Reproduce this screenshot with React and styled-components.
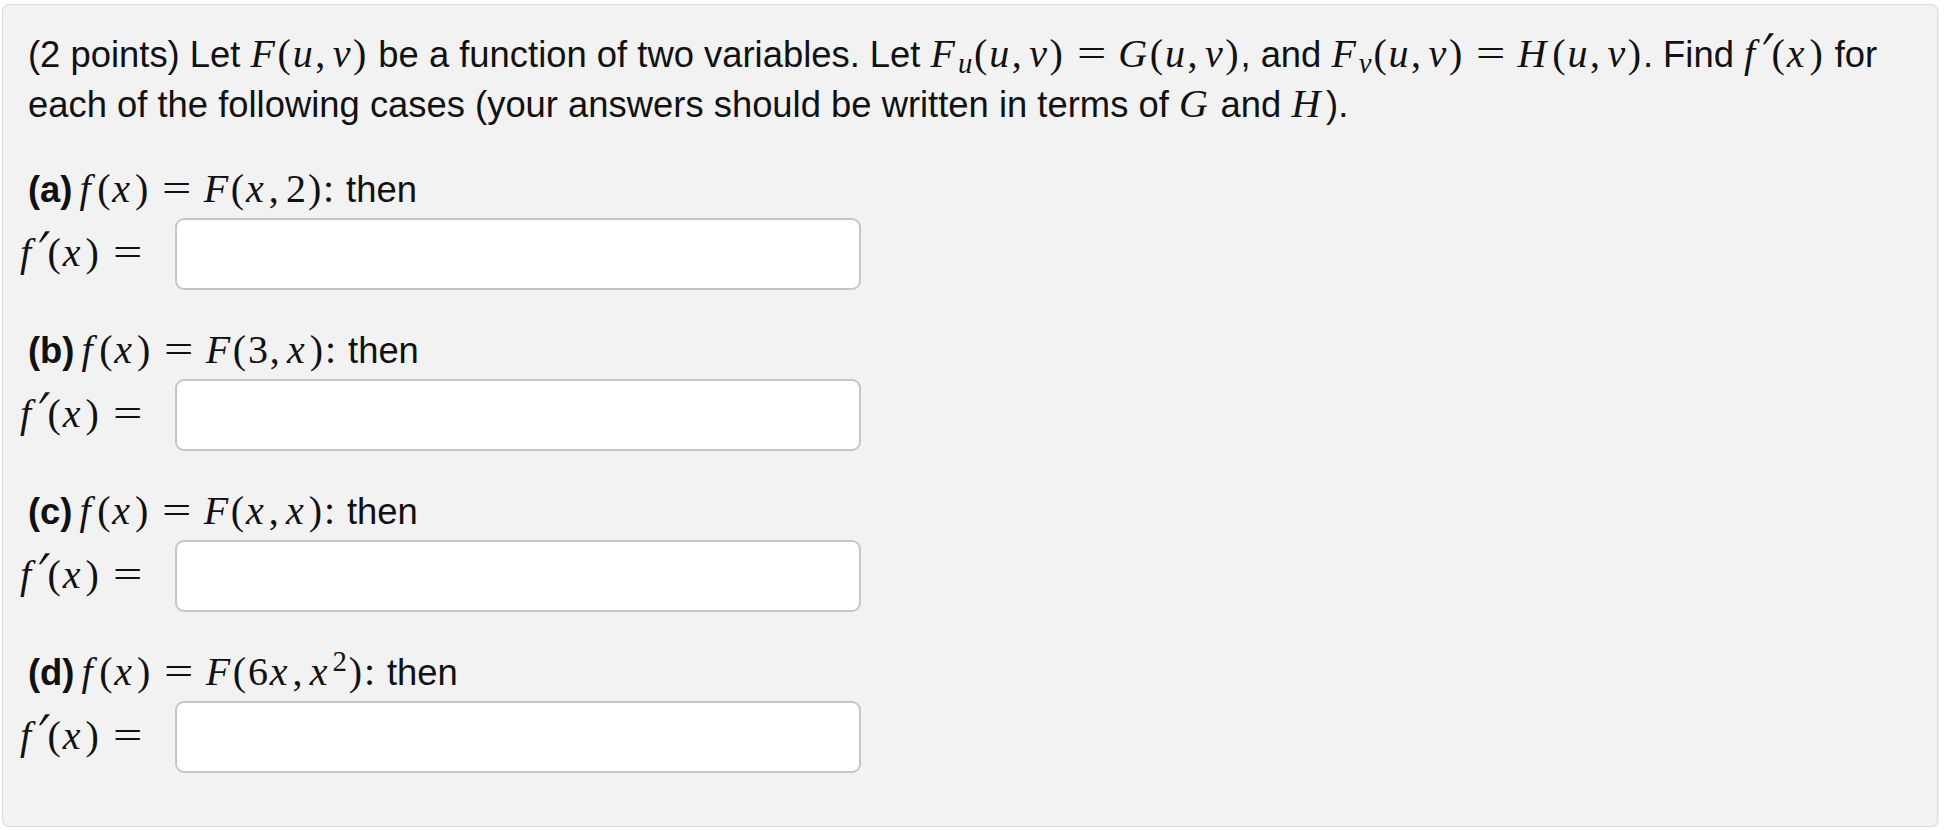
import React from "react";
import styled, { createGlobalStyle } from "styled-components";

const GlobalStyle = createGlobalStyle`
  html, body { margin: 0; padding: 0; background: #ffffff; }
  body { font-family: "Liberation Sans", Arial, Helvetica, sans-serif; color: #111; }
`;

const Page = styled.div`
  padding: 4px 14px 0 2px;
`;

const Panel = styled.div`
  box-sizing: border-box;
  height: 823px;
  background: #f2f2f2;
  border: 1px solid #d9d9d9;
  border-radius: 7px;
  box-shadow: 1px 1px 2px rgba(0, 0, 0, 0.08);
  padding: 25px 24px 0 25px;
`;

const Intro = styled.p`
  margin: 0;
  font-size: 36.4px;
  line-height: 50px;
  white-space: nowrap;
`;

const Parts = styled.div`
  display: flex;
  flex-direction: column;
  gap: 37px;
  margin-top: 35px;
`;

const Part = styled.div`
  display: flex;
  flex-direction: column;
  gap: 3px;
`;

const Label = styled.div`
  font-size: 36.4px;
  line-height: 50px;
  white-space: nowrap;
`;

const Letter = styled.b`
  font-weight: 700;
  margin-right: 7px;
`;

const AnswerRow = styled.div`
  display: flex;
  align-items: center;
  gap: 14px;
  height: 71px;
`;

const Prompt = styled.span`
  font-size: 36.4px;
  margin-left: -8px;
  width: 141px;
  white-space: nowrap;
`;

const AnswerBox = styled.input`
  box-sizing: border-box;
  width: 686px;
  height: 72px;
  background: #ffffff;
  border: 2px solid #c6c6c6;
  border-radius: 9px;
  outline: none;
  font-size: 30px;
  padding: 0 12px;
`;

const M = styled.span`
  font-family: "Liberation Serif", "Times New Roman", serif;
  font-size: 40px;
  line-height: 1;
  letter-spacing: 0.045em;
  white-space: nowrap;
`;

const I = styled.i`
  font-style: italic;
  padding-right: ${(p) => (p.$r ? p.$r : "0.02em")};
`;

const Eq = styled.span`
  display: inline-block;
  width: 0.78em;
  margin: 0 0.28em;
  text-align: center;
  letter-spacing: 0;
  transform: scaleX(1.3);
`;

const Comma = styled.span`
  margin-right: 0.14em;
`;

const Sub = styled.sub`
  font-size: 0.72em;
  font-style: italic;
  vertical-align: -0.2em;
  line-height: 0;
  margin-left: 0.01em;
`;

const Sup = styled.sup`
  font-size: 0.72em;
  vertical-align: 0.5em;
  line-height: 0;
`;

const Prime = styled.span`
  display: inline-block;
  font-family: "DejaVu Sans", sans-serif;
  font-size: 1.5em;
  line-height: 0;
  vertical-align: -0.16em;
  margin-left: -0.05em;
  margin-right: 0;
  letter-spacing: 0;
  transform: skewX(-12deg) scaleX(0.8);
`;

const UV = () => (
  <>
    (<I>u</I>
    <Comma>,</Comma>
    <I>v</I>)
  </>
);

const X = () => <I $r="0.08em">x</I>;

const FP = () => (
  <>
    <I $r="0.1em">f</I>
    <Prime>′</Prime>(<X />)
  </>
);

const parts = [
  {
    letter: "(a)",
    rhs: (
      <>
        (<X />
        <Comma>,</Comma>2)
      </>
    ),
  },
  {
    letter: "(b)",
    rhs: (
      <>
        (3<Comma>,</Comma>
        <X />)
      </>
    ),
  },
  {
    letter: "(c)",
    rhs: (
      <>
        (<X />
        <Comma>,</Comma>
        <X />)
      </>
    ),
  },
  {
    letter: "(d)",
    rhs: (
      <>
        (6<X />
        <Comma>,</Comma>
        <X />
        <Sup>2</Sup>)
      </>
    ),
  },
];

export default function App() {
  return (
    <>
      <GlobalStyle />
      <Page>
        <Panel>
          <Intro>
            (2 points) Let{" "}
            <M>
              <I>F</I>
              <UV />
            </M>{" "}
            be a function of two variables. Let{" "}
            <M>
              <I>F</I>
              <Sub>u</Sub>
              <UV />
              <Eq>=</Eq>
              <I>G</I>
              <UV />
            </M>
            , and{" "}
            <M>
              <I>F</I>
              <Sub>v</Sub>
              <UV />
              <Eq>=</Eq>
              <I $r="0.1em">H</I>
              <UV />
            </M>
            . Find{" "}
            <M>
              <FP />
            </M>{" "}
            for
            <br />
            each of the following cases (your answers should be written in terms of{" "}
            <M>
              <I>G</I>
            </M>{" "}
            and{" "}
            <M>
              <I $r="0.1em">H</I>
            </M>
            ).
          </Intro>
          <Parts>
            {parts.map((p) => (
              <Part key={p.letter}>
                <Label>
                  <Letter>{p.letter}</Letter>
                  <M>
                    <I $r="0.12em">f</I>(<X />)<Eq>=</Eq>
                    <I>F</I>
                    {p.rhs}:
                  </M>{" "}
                  then
                </Label>
                <AnswerRow>
                  <Prompt>
                    <M>
                      <FP />
                      <Eq>=</Eq>
                    </M>
                  </Prompt>
                  <AnswerBox type="text" aria-label={`answer ${p.letter}`} />
                </AnswerRow>
              </Part>
            ))}
          </Parts>
        </Panel>
      </Page>
    </>
  );
}
